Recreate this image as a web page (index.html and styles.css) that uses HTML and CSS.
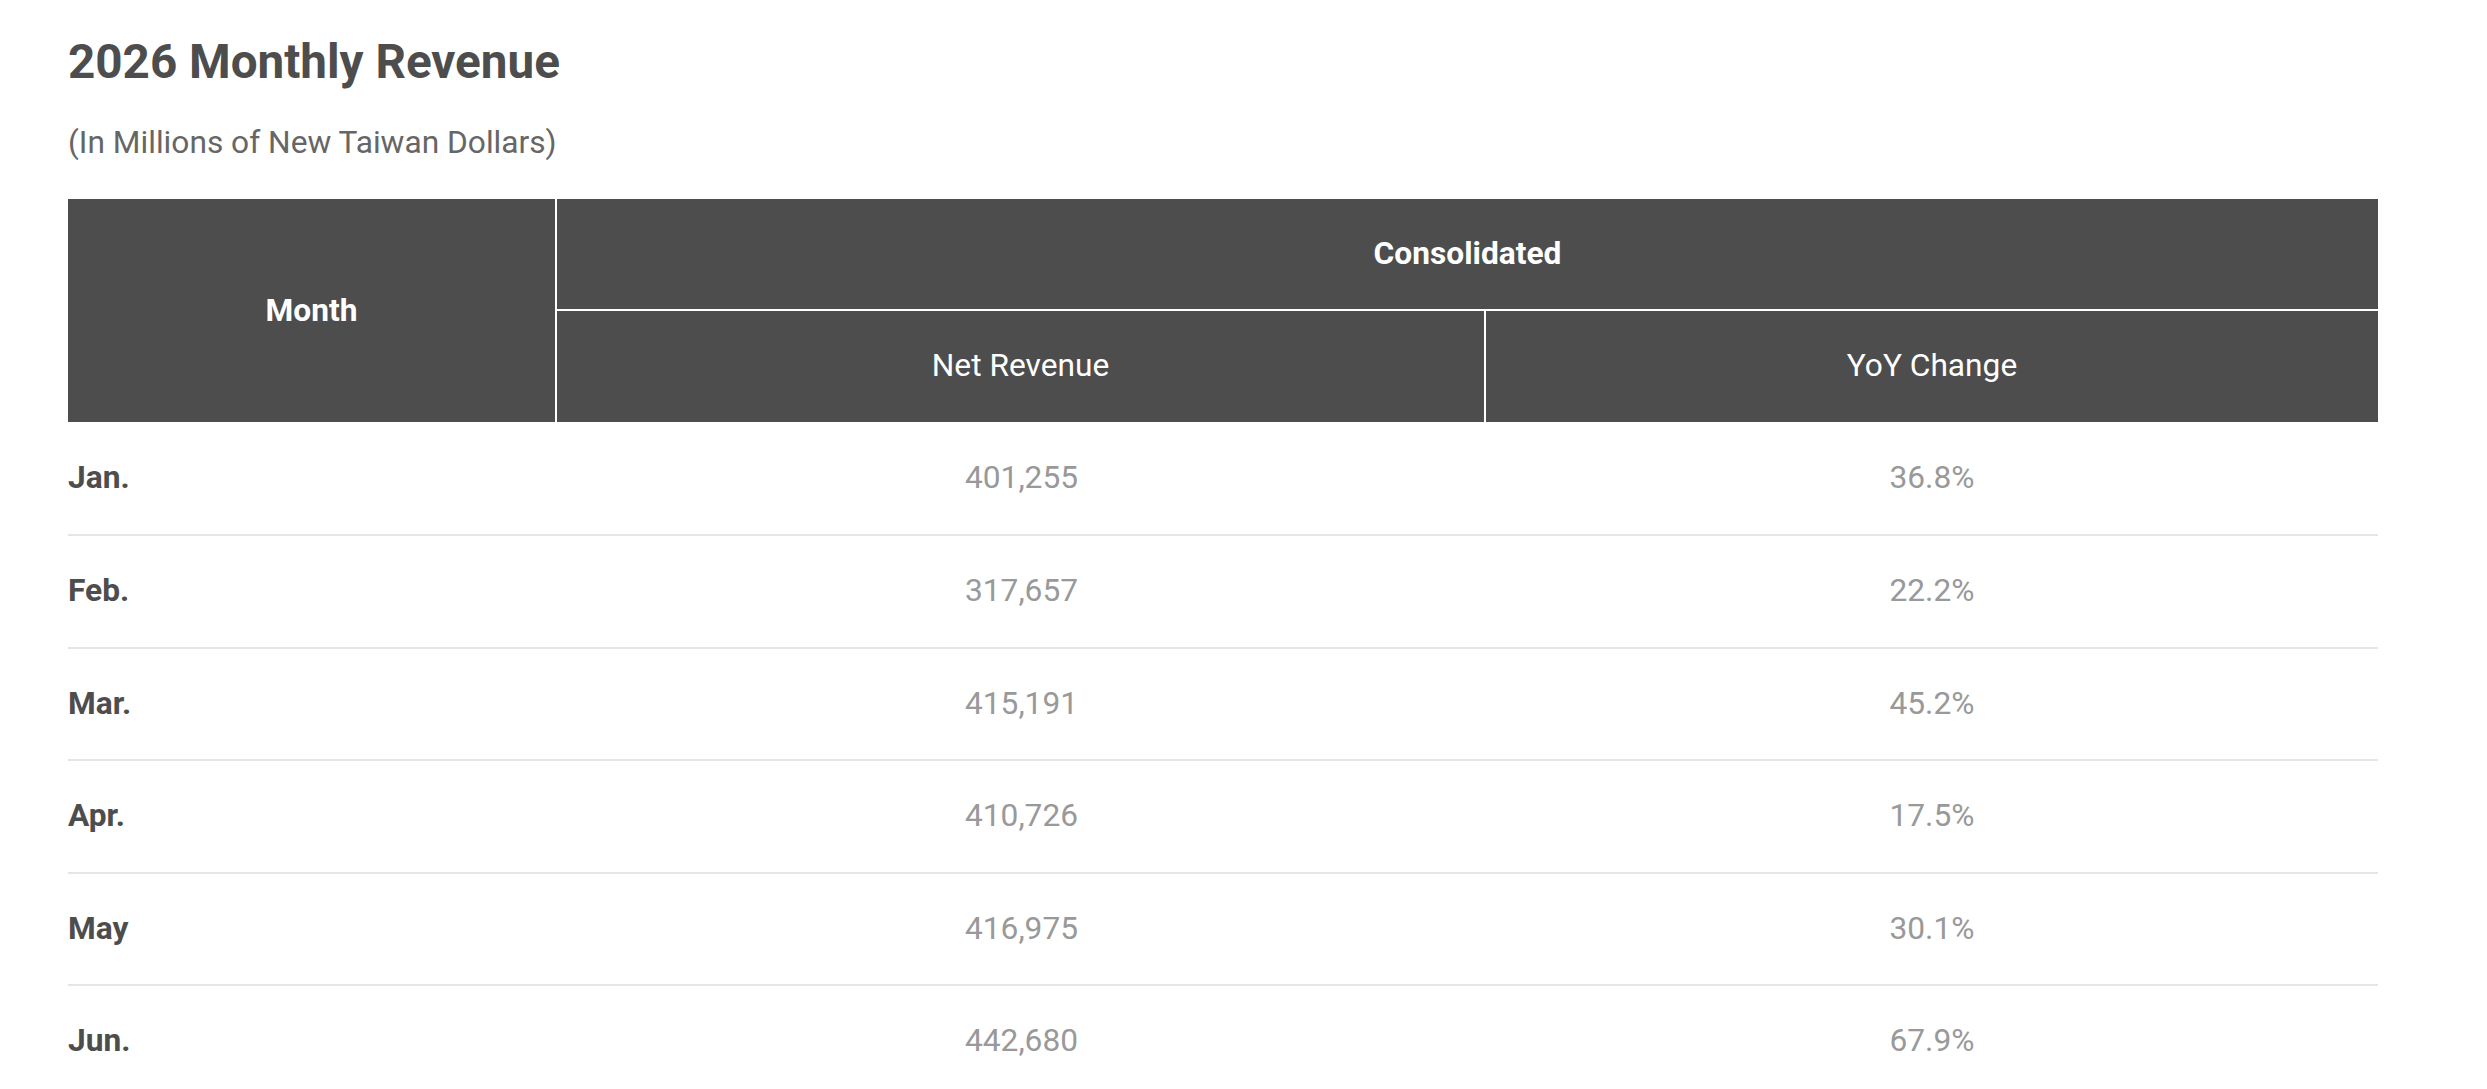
FILE: index.html
```html
<!DOCTYPE html>
<html lang="en">
<head>
<meta charset="utf-8">
<title>2026 Monthly Revenue</title>
<link rel="stylesheet" href="styles.css">
</head>
<body>
<main class="page">
  <h1 class="title">2026 Monthly Revenue</h1>
  <p class="subtitle">(In Millions of New Taiwan Dollars)</p>
  <table class="revenue">
    <colgroup>
      <col class="col-month">
      <col class="col-net">
      <col class="col-yoy">
    </colgroup>
    <thead>
      <tr class="head-top">
        <th rowspan="2" class="th-month">Month</th>
        <th colspan="2" class="th-group">Consolidated</th>
      </tr>
      <tr class="head-sub">
        <th class="th-sub th-net">Net Revenue</th>
        <th class="th-sub">YoY Change</th>
      </tr>
    </thead>
    <tbody>
      <tr><td class="month">Jan.</td><td class="num">401,255</td><td class="num">36.8%</td></tr>
      <tr><td class="month">Feb.</td><td class="num">317,657</td><td class="num">22.2%</td></tr>
      <tr><td class="month">Mar.</td><td class="num">415,191</td><td class="num">45.2%</td></tr>
      <tr><td class="month">Apr.</td><td class="num">410,726</td><td class="num">17.5%</td></tr>
      <tr><td class="month">May</td><td class="num">416,975</td><td class="num">30.1%</td></tr>
      <tr><td class="month">Jun.</td><td class="num">442,680</td><td class="num">67.9%</td></tr>
    </tbody>
  </table>
</main>
</body>
</html>
```

FILE: styles.css
```css
html, body {
  margin: 0;
  padding: 0;
  background: #ffffff;
}

body {
  font-family: Roboto, "Liberation Sans", Arial, sans-serif;
  color: #4d4d4d;
}

.page {
  padding: 34px 0 0 68px;
}

.title {
  margin: 0;
  font-size: 47.6px;
  line-height: 57px;
  font-weight: 700;
  color: #4d4d4d;
}

.subtitle {
  margin: 33px 0 0 0;
  font-size: 31.7px;
  line-height: 38px;
  font-weight: 400;
  color: #666666;
}

.revenue {
  margin-top: 37px;
  width: 2310px;
  table-layout: fixed;
  border-collapse: separate;
  border-spacing: 0;
  font-size: 31.7px;
}

.col-month { width: 489px; }
.col-net { width: 929px; }
.col-yoy { width: 892px; }

.revenue th {
  background: #4d4d4d;
  color: #ffffff;
  padding: 0;
  box-sizing: border-box;
  text-align: center;
  vertical-align: middle;
  line-height: 38px;
}

.th-month {
  font-weight: 700;
  border-right: 2px solid #ffffff;
}

.th-group {
  font-weight: 700;
  height: 111.5px;
  border-bottom: 2px solid #ffffff;
}

.th-sub {
  font-weight: 400;
  height: 111.5px;
}

.th-net {
  border-right: 2px solid #ffffff;
}

.revenue td {
  padding: 0;
  box-sizing: border-box;
  height: 112.5px;
  border-bottom: 2px solid #e5e5e5;
  vertical-align: middle;
  line-height: 38px;
}

.revenue tbody tr:first-child td {
  height: 114px;
}

.month {
  font-weight: 700;
  color: #4d4d4d;
  text-align: left;
}

.num {
  font-weight: 400;
  color: #999999;
  text-align: center;
}
```
